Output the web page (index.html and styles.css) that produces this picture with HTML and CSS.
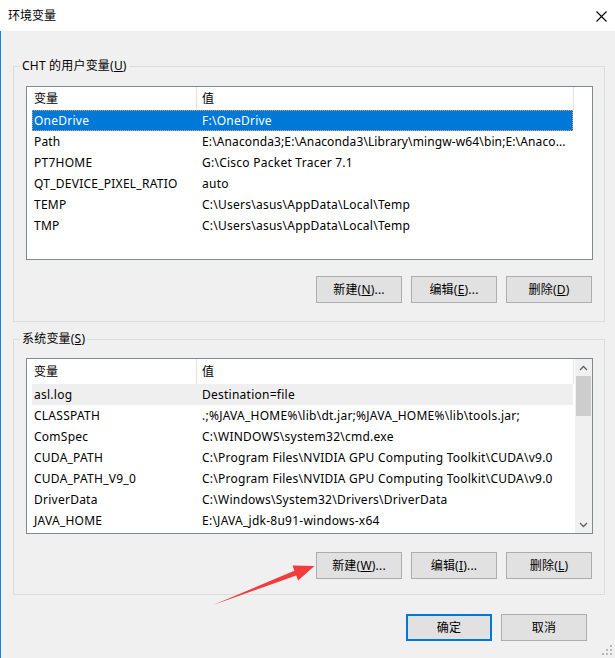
FILE: index.html
```html
<!DOCTYPE html>
<html lang="zh-CN">
<head>
<meta charset="utf-8">
<title>环境变量</title>
<link rel="stylesheet" href="styles.css">
</head>
<body>
<div class="window">
  <div class="titlebar">
    <span class="title">环境变量</span>
    <svg class="close" width="11" height="11" viewBox="0 0 11 11"><path d="M0.5 0.5 L10.5 10.5 M10.5 0.5 L0.5 10.5" stroke="#000" stroke-width="1.1" fill="none"/></svg>
  </div>
  <div class="body">
    <fieldset class="group group-user">
      <legend>CHT 的用户变量(<u>U</u>)</legend>
      <div class="list list-user">
        <div class="list-main">
          <div class="list-head">
            <div class="h-name">变量</div><div class="h-value">值</div>
          </div>
          <div class="row selected"><span class="c1">OneDrive</span><span class="c2">F:\OneDrive</span></div>
          <div class="row tight"><span class="c1">Path</span><span class="c2">E:\Anaconda3;E:\Anaconda3\Library\mingw-w64\bin;E:\Anaco...</span></div>
          <div class="row"><span class="c1">PT7HOME</span><span class="c2">G:\Cisco Packet Tracer 7.1</span></div>
          <div class="row"><span class="c1">QT_DEVICE_PIXEL_RATIO</span><span class="c2">auto</span></div>
          <div class="row"><span class="c1">TEMP</span><span class="c2">C:\Users\asus\AppData\Local\Temp</span></div>
          <div class="row"><span class="c1">TMP</span><span class="c2">C:\Users\asus\AppData\Local\Temp</span></div>
        </div>
      </div>
      <div class="buttons">
        <button class="btn">新建(<u>N</u>)...</button>
        <button class="btn">编辑(<u>E</u>)...</button>
        <button class="btn">删除(<u>D</u>)</button>
      </div>
    </fieldset>

    <fieldset class="group group-system">
      <legend>系统变量(<u>S</u>)</legend>
      <div class="list list-system">
        <div class="list-main">
          <div class="list-head tall">
            <div class="h-name">变量</div><div class="h-value">值</div>
          </div>
          <div class="row hover"><span class="c1">asl.log</span><span class="c2">Destination=file</span></div>
          <div class="row"><span class="c1">CLASSPATH</span><span class="c2">.;%JAVA_HOME%\lib\dt.jar;%JAVA_HOME%\lib\tools.jar;</span></div>
          <div class="row"><span class="c1">ComSpec</span><span class="c2">C:\WINDOWS\system32\cmd.exe</span></div>
          <div class="row"><span class="c1">CUDA_PATH</span><span class="c2">C:\Program Files\NVIDIA GPU Computing Toolkit\CUDA\v9.0</span></div>
          <div class="row"><span class="c1">CUDA_PATH_V9_0</span><span class="c2">C:\Program Files\NVIDIA GPU Computing Toolkit\CUDA\v9.0</span></div>
          <div class="row"><span class="c1">DriverData</span><span class="c2">C:\Windows\System32\Drivers\DriverData</span></div>
          <div class="row"><span class="c1">JAVA_HOME</span><span class="c2">E:\JAVA_jdk-8u91-windows-x64</span></div>
        </div>
        <div class="scrollbar">
          <div class="sb-btn"><svg width="9" height="6" viewBox="0 0 9 6"><polyline points="1,5 4.5,1.5 8,5" fill="none" stroke="#606060" stroke-width="1.3"/></svg></div>
          <div class="sb-track"><div class="sb-thumb"></div></div>
          <div class="sb-btn"><svg width="9" height="6" viewBox="0 0 9 6"><polyline points="1,1 4.5,4.5 8,1" fill="none" stroke="#606060" stroke-width="1.3"/></svg></div>
        </div>
      </div>
      <div class="buttons">
        <button class="btn">新建(<u>W</u>)...</button>
        <button class="btn">编辑(<u>I</u>)...</button>
        <button class="btn">删除(<u>L</u>)</button>
      </div>
    </fieldset>

    <div class="footer">
      <button class="btn default">确定</button>
      <button class="btn">取消</button>
    </div>
  </div>

  <svg class="arrow" width="110" height="50" viewBox="0 0 110 50">
    <polygon points="3,45 84.4,10.8 82.5,5.6 104.5,6 88.1,20.6 86.2,15.4" fill="#f03c3c"/>
  </svg>
  <svg class="grip" width="10" height="10" viewBox="0 0 10 10">
    <rect x="8" y="0" width="2" height="2" fill="#b8b8b8"/>
    <rect x="4" y="4" width="2" height="2" fill="#b8b8b8"/>
    <rect x="8" y="4" width="2" height="2" fill="#b8b8b8"/>
    <rect x="0" y="8" width="2" height="2" fill="#b8b8b8"/>
    <rect x="4" y="8" width="2" height="2" fill="#b8b8b8"/>
    <rect x="8" y="8" width="2" height="2" fill="#b8b8b8"/>
  </svg>
</div>
</body>
</html>
```

FILE: styles.css
```css
* { box-sizing: border-box; }

html, body {
  margin: 0;
  padding: 0;
  background: #f0f0f0;
}

body {
  font-family: "Segoe UI", "Noto Sans", "Noto Sans CJK SC", sans-serif;
  font-size: 12px;
  color: #000;
}

.window {
  position: relative;
  width: 615px;
  height: 658px;
  background: #f0f0f0;
  overflow: hidden;
}

.titlebar {
  height: 31px;
  background: #fff;
  display: flex;
  align-items: center;
  justify-content: space-between;
  padding: 0 8px 0 8px;
}

.title {
  font-size: 12px;
  line-height: 16px;
}

.close {
  display: block;
  margin-top: 1px;
}

.body {
  height: 627px;
  border-left: 1px solid #1883d7;
  padding: 26px 10px 0 12px;
}

.group {
  margin: 0;
  min-width: 0;
  border: 1px solid #dcdcdc;
  padding: 13px 11px 18px 12px;
}

.group legend {
  padding: 0 2px;
  margin-left: -6px;
  line-height: 16px;
  font-size: 12px;
  letter-spacing: 0.2px;
}

.group-user {
  margin-top: 1px;
  padding-top: 12px;
}

.group-system {
  margin-top: 9px;
  padding-top: 11px;
  padding-bottom: 15px;
}

.list {
  border: 1px solid #828790;
  background: #fff;
  display: flex;
  overflow: hidden;
}

.list-user { height: 174px; }
.list-system { height: 176px; }

.list-main {
  flex: 1;
  min-width: 0;
}

.list-head {
  display: flex;
  height: 23px;
  line-height: 23px;
  width: 547px;
}

.list-head.tall {
  height: 25px;
  line-height: 25px;
}

.h-name {
  width: 170px;
  padding-left: 7px;
  border-right: 1px solid #e5e5e5;
}

.h-value {
  flex: 1;
  padding-left: 5px;
  border-right: 1px solid #e5e5e5;
}

.row {
  display: flex;
  height: 21px;
  line-height: 21px;
  margin-left: 5px;
  width: 541px;
  white-space: nowrap;
  letter-spacing: 0.25px;
}

.row.tight {
  letter-spacing: 0.12px;
}

.row .c1 {
  width: 164px;
  padding-left: 2px;
  overflow: hidden;
}

.row .c2 {
  flex: 1;
  padding-left: 6px;
  overflow: hidden;
}

.row.selected {
  background: #0078d7;
  color: #fff;
  outline: 1px dotted #e0a060;
  outline-offset: -1px;
}

.row.hover {
  background: #efefef;
}

.scrollbar {
  width: 17px;
  background: #f0f0f0;
  display: flex;
  flex-direction: column;
}

.sb-btn {
  height: 17px;
  display: flex;
  align-items: center;
  justify-content: center;
}

.sb-btn svg { display: block; }

.sb-track {
  flex: 1;
  padding: 0 1px;
}

.sb-thumb {
  height: 40px;
  background: #cdcdcd;
}

.buttons {
  display: flex;
  justify-content: flex-end;
  gap: 9px;
  margin-top: 16px;
  padding-right: 1px;
}

.group-system .buttons {
  margin-top: 18px;
}

.btn {
  width: 86px;
  height: 27px;
  padding: 0;
  margin: 0;
  background: #e1e1e1;
  border: 1px solid #adadad;
  font-family: "Segoe UI", "Noto Sans", "Noto Sans CJK SC", sans-serif;
  font-size: 12px;
  letter-spacing: 0.2px;
  color: #000;
  line-height: 16px;
}

.btn.default {
  border: 2px solid #0078d7;
}

.footer {
  display: flex;
  justify-content: flex-end;
  gap: 9px;
  margin-top: 19px;
  margin-right: 18px;
}

.arrow {
  position: absolute;
  left: 210px;
  top: 560px;
}

.grip {
  position: absolute;
  right: 3px;
  bottom: 3px;
}
```
